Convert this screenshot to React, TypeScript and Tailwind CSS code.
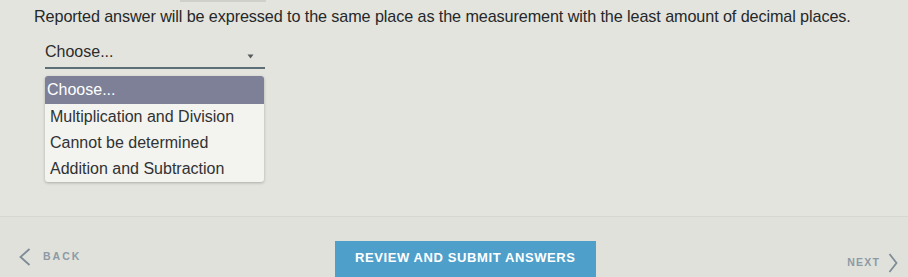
import React, { useState } from 'react';

const options = ['Multiplication and Division', 'Cannot be determined', 'Addition and Subtraction'];

const App: React.FC = () => {
  const [open] = useState(true);

  return (
    <div className="relative w-[908px] h-[277px] overflow-hidden bg-[#e3e4dd] font-['Liberation_Sans',Arial,sans-serif]">
      {/* faint line left over from the panel above */}
      <div className="ml-[180px] w-[86px] h-[2px] bg-[#cfd0ca]" />

      <div className="pl-[34px] pt-[4px]">
        <p className="text-[16.2px] leading-[20px] text-[#26282a] tracking-[-0.1px]">
          Reported answer will be expressed to the same place as the measurement with the least amount of decimal places.
        </p>

        <div className="relative ml-[11px] mt-[15px] w-[220px]">
          <div className="flex items-start justify-between h-[28px] border-b-2 border-[#5d6f76]">
            <span className="mt-[2px] text-[16px] leading-[18px] text-[#2b2c2c]">Choose...</span>
            <svg width="7" height="5" viewBox="0 0 7 5" className="mr-[11px] mt-[13px]">
              <path d="M0.5 0.5 L6.5 0.5 L3.5 4.5 Z" fill="#555b5f" />
            </svg>
          </div>

          {open && (
            <div className="absolute left-0 top-[35px] w-[219px] rounded-[3px] bg-[#f3f3ef] shadow-[0_1px_3px_rgba(0,0,0,0.25)] overflow-hidden">
              <div className="h-[28px] flex items-center pl-[2px] bg-[#7d8096] text-white text-[16px]">Choose...</div>
              {options.map(o => (
                <div key={o} className="h-[26px] flex items-center pl-[5px] text-[16px] text-[#303233]">
                  {o}
                </div>
              ))}
            </div>
          )}
        </div>
      </div>

      <div className="absolute left-0 right-0 top-[216px] bottom-0 bg-[#e0e1da] border-t border-[#d6d7d1]" />

      {/* footer */}
      <div className="absolute left-0 right-0 top-[238px] flex items-start justify-between pl-[19px] pr-[10px]">
        <div className="flex items-center gap-[12px] mt-[10px]">
          <svg width="12" height="18" viewBox="0 0 12 18">
            <path d="M10.5 1 L1.5 9 L10.5 17" fill="none" stroke="#7e8c98" strokeWidth="1.8" />
          </svg>
          <span className="text-[10.5px] font-bold tracking-[2px] text-[#8c9aa6]">BACK</span>
        </div>

        <button className="ml-[2px] mt-[3px] w-[261px] h-[36px] bg-[#4f9fcb] text-white text-[13px] font-bold tracking-[0.6px] flex items-center justify-center pb-[3px]">
          REVIEW AND SUBMIT ANSWERS
        </button>

        <div className="flex items-center gap-[8px] mt-[15px]">
          <span className="text-[10.5px] font-bold tracking-[1.2px] text-[#8c9aa6]">NEXT</span>
          <svg width="10" height="20" viewBox="0 0 10 20">
            <path d="M1.5 1 L8.5 10 L1.5 19" fill="none" stroke="#7e8c98" strokeWidth="1.8" />
          </svg>
        </div>
      </div>
    </div>
  );
};

export default App;
